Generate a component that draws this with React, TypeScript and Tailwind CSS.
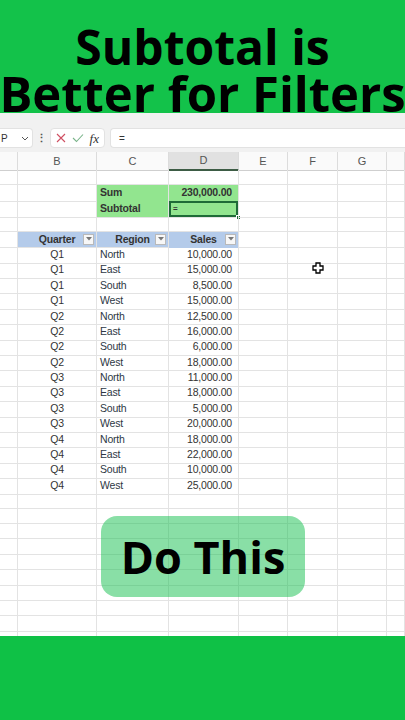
import React from "react";

const data: [string, string, string][] = [
  ["Q1", "North", "10,000.00"],
  ["Q1", "East", "15,000.00"],
  ["Q1", "South", "8,500.00"],
  ["Q1", "West", "15,000.00"],
  ["Q2", "North", "12,500.00"],
  ["Q2", "East", "16,000.00"],
  ["Q2", "South", "6,000.00"],
  ["Q2", "West", "18,000.00"],
  ["Q3", "North", "11,000.00"],
  ["Q3", "East", "18,000.00"],
  ["Q3", "South", "5,000.00"],
  ["Q3", "West", "20,000.00"],
  ["Q4", "North", "18,000.00"],
  ["Q4", "East", "22,000.00"],
  ["Q4", "South", "10,000.00"],
  ["Q4", "West", "25,000.00"],
];

const gridCols = "grid grid-cols-[18px_79px_72px_70px_49px_50px_49px_1fr]";
const cell = "relative flex items-center h-full whitespace-nowrap border-r border-b border-[#e3e3e3] px-[3px]";

const FilterButton = () => (
  <div className="absolute right-[2px] top-[2px] w-[11px] h-[11px] bg-[#f7f7f7] border border-[#b9b9b9] flex items-center justify-center">
    <svg width="6" height="4" viewBox="0 0 6 4">
      <path d="M0 0 L6 0 L3 3.5 Z" fill="#777" />
    </svg>
  </div>
);

const EmptyCells = ({ from }: { from: number }) => (
  <>
    {Array.from({ length: 8 - from }).map((_, i) => (
      <div key={i} className={cell} />
    ))}
  </>
);

const renderRow = (i: number) => {
  const rowCls = `${gridCols} h-[15.4px]`;
  if (i === 1) {
    return (
      <div key={i} className={rowCls}>
        <div className={cell} />
        <div className={cell} />
        <div className={`${cell} bg-[#92e58f] border-[#92e58f] font-bold`}>Sum</div>
        <div className={`${cell} bg-[#92e58f] border-b-[#92e58f] justify-end pr-[6px] font-bold`}>230,000.00</div>
        <EmptyCells from={4} />
      </div>
    );
  }
  if (i === 2) {
    return (
      <div key={i} className={rowCls}>
        <div className={cell} />
        <div className={cell} />
        <div className={`${cell} bg-[#92e58f] border-[#92e58f] font-bold`}>Subtotal</div>
        <div className={`${cell} bg-[#92e58f]`}>
          <div className="absolute inset-0 border-2 border-[#1e6b37]" />
          <div className="absolute right-[-3px] bottom-[-3px] w-[5px] h-[5px] bg-[#1e6b37] border border-white" />
          <span className="text-[8px] font-bold leading-none pl-[1px]">=</span>
        </div>
        <EmptyCells from={4} />
      </div>
    );
  }
  if (i === 4) {
    return (
      <div key={i} className={rowCls}>
        <div className={cell} />
        <div className={`${cell} bg-[#b4cbea] border-[#b4cbea] justify-center font-bold`}>
          Quarter
          <FilterButton />
        </div>
        <div className={`${cell} bg-[#b4cbea] border-[#b4cbea] justify-center font-bold`}>
          Region
          <FilterButton />
        </div>
        <div className={`${cell} bg-[#b4cbea] border-b-[#b4cbea] justify-center font-bold`}>
          Sales
          <FilterButton />
        </div>
        <EmptyCells from={4} />
      </div>
    );
  }
  if (i >= 5 && i < 5 + data.length) {
    const [q, r, s] = data[i - 5];
    return (
      <div key={i} className={rowCls}>
        <div className={cell} />
        <div className={`${cell} justify-center`}>{q}</div>
        <div className={`${cell} text-[#2d3845]`}>{r}</div>
        <div className={`${cell} justify-end pr-[6px]`}>{s}</div>
        <EmptyCells from={4} />
      </div>
    );
  }
  return (
    <div key={i} className={rowCls}>
      <EmptyCells from={0} />
    </div>
  );
};

const App: React.FC = () => {
  const letters = ["", "B", "C", "D", "E", "F", "G", ""];
  return (
    <div className="relative w-[405px] h-[720px] overflow-hidden bg-white font-['Liberation_Sans',Arial,sans-serif]">
      {/* Title */}
      <div className="h-[113px] bg-[#13c24a] flex flex-col items-center pt-[23px] font-['Open_Sans',sans-serif] font-bold text-black leading-[47px]">
        <div className="whitespace-nowrap text-[48px]">Subtotal is</div>
        <div className="whitespace-nowrap text-[49px]">Better for Filters</div>
      </div>

      {/* Formula bar */}
      <div className="h-[39px] bg-[#f1f1f1] flex items-start pt-[15px] gap-[5px]">
        <div className="w-[33px] h-[20px] bg-white rounded-r-[4px] border border-l-0 border-[#e2e2e2] flex items-center justify-between pl-[1px] pr-[3px] text-[10px] text-[#333]">
          <span>P</span>
          <svg width="8" height="5" viewBox="0 0 8 5">
            <path d="M1 1 L4 4 L7 1" fill="none" stroke="#555" strokeWidth="1" />
          </svg>
        </div>
        <div className="w-[7px] h-[20px] flex items-center justify-center text-[#555] text-[11px] font-bold">⋮</div>
        <div className="w-[55px] h-[20px] bg-white rounded-[4px] border border-[#e2e2e2] flex items-center justify-between px-[5px]">
          <svg width="10" height="10" viewBox="0 0 10 10">
            <path d="M1 1 L9 9 M9 1 L1 9" stroke="#cf4f62" strokeWidth="1.1" />
          </svg>
          <svg width="12" height="10" viewBox="0 0 12 10">
            <path d="M1 5 L4.5 8.5 L11 1.5" fill="none" stroke="#7ab48a" strokeWidth="1.1" />
          </svg>
          <span className="font-['Liberation_Serif',serif] italic text-[13px] text-[#333] leading-none">fx</span>
        </div>
        <div className="flex-1 h-[20px] bg-white rounded-l-[4px] border border-r-0 border-[#e2e2e2] flex items-center pl-[8px] text-[10px] text-[#333]">
          =
        </div>
      </div>

      {/* Column headers */}
      <div className={`${gridCols} h-[18px] bg-[#fafafa] text-[11px] text-[#555]`}>
        {letters.map((l, i) => (
          <div
            key={i}
            className={`flex items-center justify-center border-r border-[#dcdcdc] ${
              i === 3 ? "bg-[#e1e1e1] border-b-2 border-b-[#3d5c45]" : "border-b border-b-[#cfcfcf]"
            }`}
          >
            {l}
          </div>
        ))}
      </div>

      {/* Grid */}
      <div className="h-[466px] overflow-hidden text-[10.5px] text-[#333] tracking-[-0.2px]">
        {Array.from({ length: 31 }).map((_, i) => renderRow(i))}
      </div>

      {/* Bottom bar */}
      <div className="h-[84px] bg-[#0fc146]" />

      {/* Do This overlay */}
      <div className="absolute left-[101px] top-[516px] w-[204px] h-[81px] rounded-[16px] bg-[#14c04d]/50 flex items-center justify-center font-['Open_Sans',sans-serif] font-bold text-black text-[45px] leading-none">
        Do This
      </div>

      {/* Cursor */}
      <svg className="absolute left-[312px] top-[262px]" width="12" height="12" viewBox="0 0 12 12">
        <path d="M4 1 H8 V4 H11 V8 H8 V11 H4 V8 H1 V4 H4 Z" fill="white" stroke="black" strokeWidth="1.3" />
      </svg>
    </div>
  );
};

export default App;
